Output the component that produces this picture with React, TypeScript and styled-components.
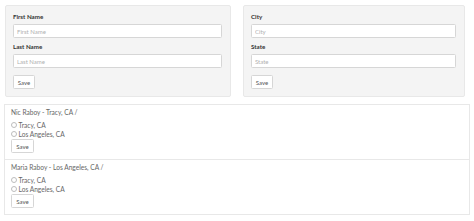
import React from 'react';
import styled, { createGlobalStyle } from 'styled-components';

const GlobalStyle = createGlobalStyle`
  body {
    margin: 0;
    background: #ffffff;
    font-family: Lato, "Open Sans", sans-serif;
    color: #333333;
  }
`;

const Page = styled.div`
  padding: 5px 5px 0 4px;
  width: 474px;
  box-sizing: border-box;
`;

const FormRow = styled.div`
  display: grid;
  grid-template-columns: 226px 222px;
  column-gap: 12px;
  padding-left: 1px;
`;

const Well = styled.form`
  background: #f4f4f4;
  border: 1px solid #e8e8e8;
  border-radius: 2px;
  height: 92px;
  box-sizing: border-box;
  padding: 7px 8px 0 7px;
  display: flex;
  flex-direction: column;
`;

const Label = styled.label`
  font-size: 6.2px;
  font-weight: 700;
  line-height: 8px;
  color: #333333;
  margin-bottom: 3px;
`;

const Input = styled.input`
  height: 14px;
  box-sizing: border-box;
  border: 1px solid #d6d6d6;
  border-radius: 1.5px;
  background: #ffffff;
  padding: 0 3px;
  font-family: inherit;
  font-size: 6px;
  margin-bottom: 5px;
  outline: none;

  &::placeholder {
    color: #b0b0b0;
  }
`;

const Button = styled.button`
  align-self: flex-start;
  width: 22px;
  height: 14px;
  padding: 0;
  box-sizing: border-box;
  border: 1px solid #d6d6d6;
  border-radius: 1.5px;
  background: #ffffff;
  font-family: inherit;
  font-size: 6px;
  color: #555555;
  margin-top: 2px;
`;

const List = styled.ul`
  list-style: none;
  margin: 7px 0 0 0;
  padding: 0;
  width: 466px;
`;

const Item = styled.li`
  border: 1px solid #e8e8e8;
  padding: 3px 7px 6px 6px;
  display: flex;
  flex-direction: column;

  & + & {
    border-top: none;
  }
`;

const Title = styled.div`
  font-size: 6.6px;
  line-height: 9px;
  color: #666666;
  margin-bottom: 3px;
`;

const RadioRow = styled.label`
  display: flex;
  align-items: center;
  height: 9px;
  font-size: 6.6px;
  color: #666666;
`;

const Radio = styled.input`
  appearance: none;
  width: 6px;
  height: 6px;
  margin: 0 1.5px 0 0;
  border: 0.6px solid #bdbdbd;
  border-radius: 50%;
  background: #ffffff;
`;

const ItemButton = styled(Button)`
  margin-top: 1px;
  width: 23px;
`;

const people = [
  { name: 'Nic Raboy', city: 'Tracy, CA' },
  { name: 'Maria Raboy', city: 'Los Angeles, CA' },
];

const cities = ['Tracy, CA', 'Los Angeles, CA'];

export default function App() {
  return (
    <>
      <GlobalStyle />
      <Page>
        <FormRow>
          <Well onSubmit={(e) => e.preventDefault()}>
            <Label>First Name</Label>
            <Input placeholder="First Name" />
            <Label>Last Name</Label>
            <Input placeholder="Last Name" />
            <Button type="button">Save</Button>
          </Well>
          <Well onSubmit={(e) => e.preventDefault()}>
            <Label>City</Label>
            <Input placeholder="City" />
            <Label>State</Label>
            <Input placeholder="State" />
            <Button type="button">Save</Button>
          </Well>
        </FormRow>
        <List>
          {people.map((p, i) => (
            <Item key={p.name}>
              <Title>
                {p.name} - {p.city} /
              </Title>
              {cities.map((c) => (
                <RadioRow key={c}>
                  <Radio type="radio" name={`person-${i}`} />
                  {c}
                </RadioRow>
              ))}
              <ItemButton type="button">Save</ItemButton>
            </Item>
          ))}
        </List>
      </Page>
    </>
  );
}
